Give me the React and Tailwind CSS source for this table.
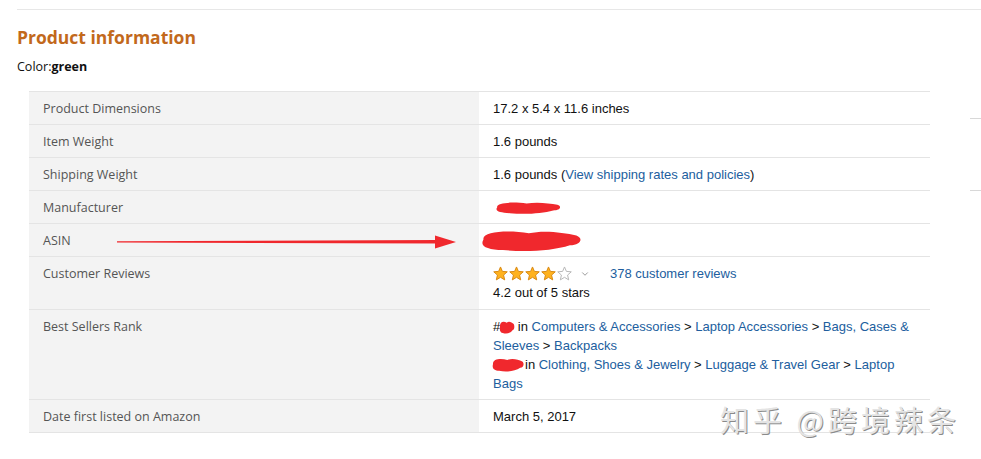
import { ChevronDown } from "lucide-react";

const label = "font-['Open_Sans',sans-serif] text-[12.5px] text-[#555]";
const value = "font-['Liberation_Sans',Arial,sans-serif] text-[13px] text-[#111]";
const link = "text-[#215e9e]";

function Star({ filled }) {
  return (
    <svg width="15" height="15" viewBox="0 0 24 24" className="mr-[1px]">
      <polygon
        points="12,1.5 15,8.6 22.8,9.3 16.9,14.5 18.7,22.2 12,18.1 5.3,22.2 7.1,14.5 1.2,9.3 9,8.6"
        fill={filled ? "#ffb21e" : "#fff"}
        stroke={filled ? "#d98a14" : "#b8b8b8"}
        strokeWidth="1.6"
        strokeLinejoin="round"
      />
    </svg>
  );
}

function Scribble({ w, h, className }) {
  return (
    <svg width={w} height={h} viewBox="0 0 100 40" preserveAspectRatio="none" className={`block shrink-0 ${className}`}>
      <path
        d="M6 18 C 4 6, 30 4, 48 9 C 62 4, 80 8, 92 12 C 99 16, 96 26, 86 26 C 70 34, 46 36, 24 33 C 10 32, 2 28, 6 18 Z"
        fill="#f0282d"
      />
    </svg>
  );
}

function Row({ name, children, pb = "pb-[6px]" }) {
  return (
    <div className="flex border-b border-[#e4e4e4]">
      <div className={`w-[450px] shrink-0 bg-[#f3f3f3] pl-[14px] pt-[7px] leading-[19px] ${pb} ${label}`}>
        {name}
      </div>
      <div className={`flex-1 pl-[14px] pr-[14px] pt-[7px] leading-[19px] ${pb} ${value}`}>
        {children}
      </div>
    </div>
  );
}

export default function App() {
  return (
    <div className="relative h-[459px] w-[981px] overflow-hidden bg-white">
      <div className="pl-[17px] pt-[9px]">
        <div className="border-t border-[#e7e7e7]" />
        <h2 className="mt-[15px] font-['Open_Sans',sans-serif] text-[17.5px] font-bold leading-[24px] text-[#c2691c]">
          Product information
        </h2>
        <p className="mt-[10px] font-['Open_Sans',sans-serif] text-[12.5px] leading-[16px] text-[#111]">
          Color:<span className="font-bold">green</span>
        </p>

        <div className="ml-[12px] mt-[16px] w-[901px] border-t border-[#e4e4e4]">
          <Row name="Product Dimensions">17.2 x 5.4 x 11.6 inches</Row>
          <Row name="Item Weight">1.6 pounds</Row>
          <Row name="Shipping Weight">
            1.6 pounds (<span className={link}>View shipping rates and policies</span>)
          </Row>
          <Row name="Manufacturer">
            <div className="flex h-[19px] items-center">
              <Scribble w={70} h={16} />
            </div>
          </Row>
          <Row name="ASIN">
            <div className="flex h-[19px] items-center">
              <Scribble w={108} h={28} className="-ml-[16px]" />
            </div>
          </Row>
          <Row name="Customer Reviews" pb="pb-[7px]">
            <div className="flex h-[19px] items-center">
              <Star filled />
              <Star filled />
              <Star filled />
              <Star filled />
              <Star />
              <ChevronDown size={10} strokeWidth={2} className="ml-[7px] mt-[1px] text-[#888]" />
              <span className={`ml-[20px] ${link}`}>378 customer reviews</span>
            </div>
            <div>4.2 out of 5 stars</div>
          </Row>
          <Row name="Best Sellers Rank" pb="pb-[6px]">
            <div>
              #<span className="inline-block h-[14px] w-[14px] align-middle">
                <Scribble w={16} h={17} className="-ml-[1px] -mt-[2px]" />
              </span>
              {" "}in <span className={link}>Computers &amp; Accessories</span> &gt;{" "}
              <span className={link}>Laptop Accessories</span> &gt;{" "}
              <span className={link}>Bags, Cases &amp;</span>
              <br />
              <span className={link}>Sleeves</span> &gt; <span className={link}>Backpacks</span>
            </div>
            <div>
              <span className="inline-block h-[14px] w-[32px] align-middle">
                <Scribble w={34} h={18} className="-ml-[2px] -mt-[3px]" />
              </span>
              in <span className={link}>Clothing, Shoes &amp; Jewelry</span> &gt;{" "}
              <span className={link}>Luggage &amp; Travel Gear</span> &gt;{" "}
              <span className={link}>Laptop</span>
              <br />
              <span className={link}>Bags</span>
            </div>
          </Row>
          <Row name="Date first listed on Amazon">March 5, 2017</Row>
        </div>
      </div>

      {/* stray lines at the right edge */}
      <div className="absolute left-[970px] top-[118px] h-px w-[11px] bg-[#d8d8d8]" />
      <div className="absolute left-[970px] top-[190px] h-px w-[11px] bg-[#d8d8d8]" />

      {/* red arrow */}
      <svg className="absolute left-[115px] top-[233px]" width="345" height="18" viewBox="0 0 345 18">
        <path d="M2 8.2 L322 7 L322 10.6 L2 9.4 Z" fill="#f0282d" />
        <path d="M320 2.5 L341 9 L320 15.5 Z" fill="#f0282d" />
      </svg>

      {/* watermark */}
      <div className="absolute left-[720px] top-[400px] font-['Noto_Sans_CJK_SC',sans-serif] text-[29px] leading-[38px] tracking-[4px] text-[#e4e4e4] [text-shadow:1px_1px_0_#8a8a8a]">
        知乎 @跨境辣条
      </div>
    </div>
  );
}
